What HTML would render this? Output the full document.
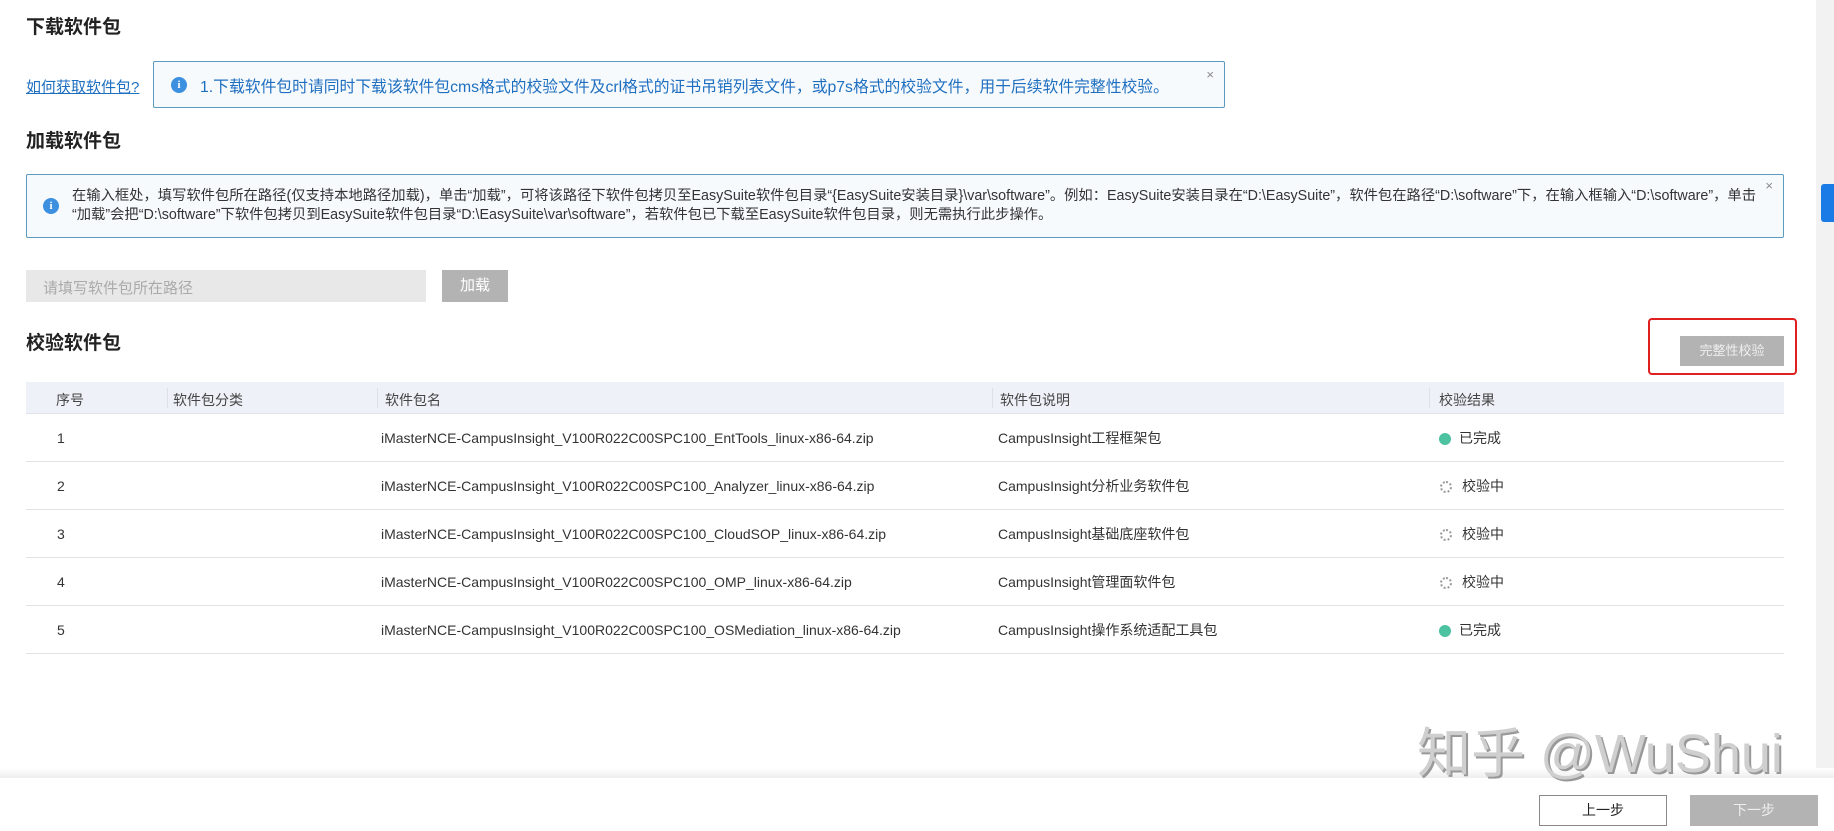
<!DOCTYPE html>
<html><head><meta charset="utf-8"><style>
*{margin:0;padding:0;box-sizing:border-box}
body{width:1834px;height:831px;background:#fff;position:relative;overflow:hidden;font-family:"Liberation Sans","Noto Sans CJK SC",sans-serif;color:#333}
.abs{position:absolute}
h2{position:absolute;left:26px;font-size:19px;font-weight:bold;color:#222}
.box{position:absolute;border:1px solid #5b9bc0;background:#f6fafd;border-radius:2px}
.ic{position:absolute;width:16px;height:16px;border-radius:50%;background:#3d8fe0;color:#fff;font-size:11px;font-weight:bold;text-align:center;line-height:16px;font-family:"Liberation Serif",serif}
.x{position:absolute;color:#888;font-size:13px}
.th{position:absolute;top:382px;left:26px;width:1758px;height:32px;background:#eef2f8;border-bottom:1px solid #e0e4ea}
.th span{position:absolute;top:8px;font-size:14px;color:#444}
.sep{position:absolute;top:6px;width:1px;height:20px;background:#dde2e8}
.row{position:absolute;left:26px;width:1758px;height:48px;border-bottom:1px solid #e3e3e3;font-size:14px;color:#333}
.row span{position:absolute;top:0;line-height:48px}
.row span.dot{width:12px;height:12px;border-radius:50%;background:#4cc2a0;top:19px}
.row span.spin{width:12px;height:12px;border-radius:50%;border:2px dotted #999;top:19px}
</style></head><body>
<h2 style="top:12px">下载软件包</h2>
<a class="abs" style="left:26px;top:76px;font-size:15px;color:#1f6fc0;text-decoration:underline">如何获取软件包?</a>
<div class="box" style="left:153px;top:61px;width:1072px;height:47px">
<div class="ic" style="left:17px;top:15px">i</div>
<div class="abs" style="left:46px;top:12px;font-size:15.8px;color:#1f6fc0;white-space:nowrap">1.下载软件包时请同时下载该软件包cms格式的校验文件及crl格式的证书吊销列表文件，或p7s格式的校验文件，用于后续软件完整性校验。</div>
<div class="x" style="right:10px;top:5px">×</div>
</div>
<h2 style="top:126px">加载软件包</h2>
<div class="box" style="left:26px;top:174px;width:1758px;height:64px">
<div class="ic" style="left:16px;top:23px">i</div>
<div class="abs" style="left:45px;top:12px;font-size:14.3px;line-height:19px;color:#333;white-space:nowrap">在输入框处，填写软件包所在路径(仅支持本地路径加载)，单击“加载”，可将该路径下软件包拷贝至EasySuite软件包目录“{EasySuite安装目录}\var\software”。例如：EasySuite安装目录在“D:\EasySuite”，软件包在路径“D:\software”下，在输入框输入“D:\software”，单击<br>“加载”会把“D:\software”下软件包拷贝到EasySuite软件包目录“D:\EasySuite\var\software”，若软件包已下载至EasySuite软件包目录，则无需执行此步操作。</div>
<div class="x" style="right:10px;top:3px">×</div>
</div>
<div class="abs" style="left:26px;top:270px;width:400px;height:32px;background:#e8e8e8;color:#aaa;font-size:15px;padding:7px 17px">请填写软件包所在路径</div>
<div class="abs" style="left:442px;top:270px;width:66px;height:32px;background:#b3b3b3;color:#fff;font-size:15px;text-align:center;line-height:32px">加载</div>
<h2 style="top:328px">校验软件包</h2>
<div class="abs" style="left:1648px;top:318px;width:149px;height:57px;border:2px solid #e02020;border-radius:4px"></div>
<div class="abs" style="left:1680px;top:336px;width:104px;height:30px;background:#b3b3b3;color:#eee;font-size:13px;text-align:center;line-height:30px">完整性校验</div>
<div class="th">
<span style="left:30px">序号</span><div class="sep" style="left:141px"></div>
<span style="left:147px">软件包分类</span><div class="sep" style="left:351px"></div>
<span style="left:359px">软件包名</span><div class="sep" style="left:966px"></div>
<span style="left:974px">软件包说明</span><div class="sep" style="left:1403px"></div>
<span style="left:1413px">校验结果</span>
</div>
<div class="row" style="top:414px"><span style="left:31px">1</span><span style="left:355px">iMasterNCE-CampusInsight_V100R022C00SPC100_EntTools_linux-x86-64.zip</span><span style="left:972px">CampusInsight工程框架包</span><span class="dot" style="left:1413px"></span><span style="left:1433px">已完成</span></div>
<div class="row" style="top:462px"><span style="left:31px">2</span><span style="left:355px">iMasterNCE-CampusInsight_V100R022C00SPC100_Analyzer_linux-x86-64.zip</span><span style="left:972px">CampusInsight分析业务软件包</span><span class="spin" style="left:1414px"></span><span style="left:1436px">校验中</span></div>
<div class="row" style="top:510px"><span style="left:31px">3</span><span style="left:355px">iMasterNCE-CampusInsight_V100R022C00SPC100_CloudSOP_linux-x86-64.zip</span><span style="left:972px">CampusInsight基础底座软件包</span><span class="spin" style="left:1414px"></span><span style="left:1436px">校验中</span></div>
<div class="row" style="top:558px"><span style="left:31px">4</span><span style="left:355px">iMasterNCE-CampusInsight_V100R022C00SPC100_OMP_linux-x86-64.zip</span><span style="left:972px">CampusInsight管理面软件包</span><span class="spin" style="left:1414px"></span><span style="left:1436px">校验中</span></div>
<div class="row" style="top:606px"><span style="left:31px">5</span><span style="left:355px">iMasterNCE-CampusInsight_V100R022C00SPC100_OSMediation_linux-x86-64.zip</span><span style="left:972px">CampusInsight操作系统适配工具包</span><span class="dot" style="left:1413px"></span><span style="left:1433px">已完成</span></div>
<div class="abs" style="left:1816px;top:0;width:18px;height:778px;background:#f2f2f2"></div>
<div class="abs" style="left:1821px;top:184px;width:13px;height:38px;background:#1a7ae6;border-radius:3px 0 0 3px"></div>
<div class="abs" style="left:0;top:768px;width:1834px;height:10px;background:linear-gradient(#fff,#eee)"></div>
<div class="abs" style="left:0;top:778px;width:1834px;height:53px;background:#fff"></div>
<div class="abs" style="left:1417px;top:724px;font-size:54px;line-height:60px;color:#cfcfcf;text-shadow:2px 2px 0 #999;white-space:nowrap">知乎 @WuShui</div>
<div class="abs" style="left:1539px;top:795px;width:128px;height:31px;border:1px solid #888;font-size:14px;text-align:center;line-height:29px;color:#222">上一步</div>
<div class="abs" style="left:1690px;top:795px;width:128px;height:31px;background:#b3b3b3;font-size:14px;text-align:center;line-height:31px;color:#eee">下一步</div>
</body></html>
